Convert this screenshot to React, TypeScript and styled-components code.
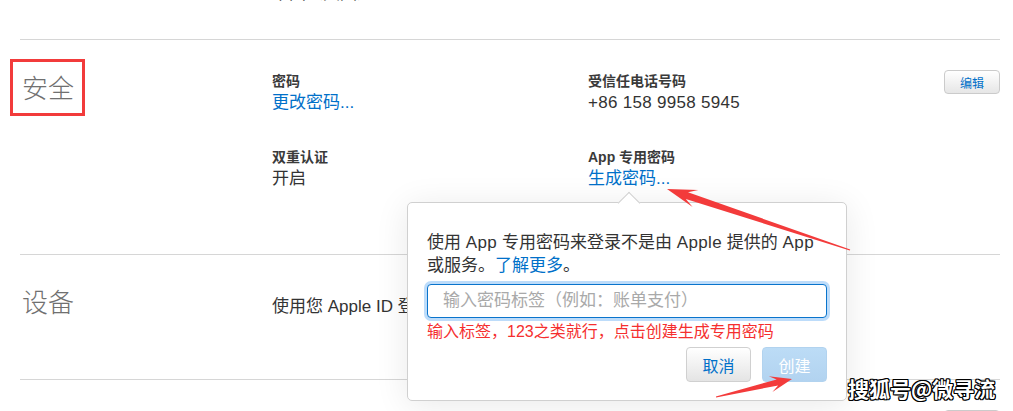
import React from "react";
import styled, { createGlobalStyle } from "styled-components";

const GlobalStyle = createGlobalStyle`
  html, body { margin: 0; padding: 0; background: #fff; }
  body {
    font-family: "Liberation Sans", "Noto Sans CJK SC", sans-serif;
    color: #333;
    overflow: hidden;
  }
  * { box-sizing: border-box; }
`;

const Page = styled.div`
  position: relative;
  width: 1013px;
  height: 411px;
  overflow: hidden;
  background: #fff;
`;

const Content = styled.div`
  margin-top: -17px;
  padding: 0 13px 0 20px;
`;

const Section = styled.section<{ $top: number; $bottom: number; $line?: boolean }>`
  display: grid;
  grid-template-columns: 252px 316px 1fr 56px;
  align-items: start;
  padding-top: ${(p) => p.$top}px;
  padding-bottom: ${(p) => p.$bottom}px;
  border-top: ${(p) => (p.$line ? "1px solid #d6d6d6" : "none")};
`;

const Heading = styled.h2`
  position: relative;
  justify-self: start;
  align-self: start;
  margin: 0 0 0 2px;
  font-family: "Noto Sans CJK SC", sans-serif;
  font-weight: 300;
  font-size: 26px;
  line-height: 34px;
  color: #707070;
`;

const Highlight = styled.span`
  position: absolute;
  left: -12px;
  right: -11px;
  top: -11px;
  bottom: -12px;
  border: 3px solid #f23b3b;
`;

const Column = styled.div`
  display: flex;
  flex-direction: column;
  gap: 32px;
`;

const Field = styled.div`
  display: flex;
  flex-direction: column;
`;

const Label = styled.div`
  font-size: 14px;
  font-weight: bold;
  line-height: 22px;
  color: #3a3a3a;
`;

const Value = styled.div<{ $link?: boolean; $spaced?: boolean }>`
  font-size: 17px;
  line-height: 22px;
  color: ${(p) => (p.$link ? "#0070c9" : "#333")};
  letter-spacing: ${(p) => (p.$spaced ? "0.3px" : "0")};
`;

const Description = styled.div`
  grid-column: 2 / 5;
  margin-top: 12px;
  font-size: 17px;
  line-height: 22px;
  color: #333;
  white-space: nowrap;
`;

const EditButton = styled.button`
  grid-column: 4;
  align-self: start;
  width: 56px;
  height: 24px;
  padding: 0;
  font-family: "Noto Sans CJK SC", sans-serif;
  font-size: 12px;
  color: #0070c9;
  border: 1px solid #cbcbcb;
  border-radius: 4px;
  background: linear-gradient(#ffffff, #e6e6e6);
`;

const Popover = styled.div`
  position: absolute;
  left: 407px;
  top: 202px;
  width: 440px;
  height: 199px;
  padding: 28px 19px 18px 19px;
  background: #fff;
  border: 1px solid #d0d0d0;
  border-radius: 5px;
  box-shadow: 0 4px 34px rgba(0, 0, 0, 0.09);
  &::before {
    content: "";
    position: absolute;
    left: 213px;
    top: -8px;
    width: 15px;
    height: 15px;
    background: #fff;
    border-left: 1px solid #d0d0d0;
    border-top: 1px solid #d0d0d0;
    transform: rotate(45deg);
  }
`;

const Text = styled.p`
  margin: 0;
  font-size: 17px;
  line-height: 23px;
  color: #333;
`;

const Link = styled.a`
  color: #0070c9;
  text-decoration: none;
`;

const Latin = styled.span`
  font-family: "Liberation Sans", sans-serif;
  letter-spacing: 0.4px;
`;

const Input = styled.input`
  display: block;
  width: 100%;
  height: 34px;
  margin-top: 7px;
  padding: 0 15px;
  font-family: "Liberation Sans", "Noto Sans CJK SC", sans-serif;
  font-size: 17px;
  color: #333;
  border: 1px solid #0a74cc;
  border-radius: 4px;
  outline: none;
  box-shadow: 0 0 0 3px rgba(135, 192, 245, 0.55);
  &::placeholder { color: #a9a9a9; }
`;

const Note = styled.div`
  margin-top: 4px;
  font-size: 16px;
  line-height: 20px;
  color: #f52f2f;
`;

const ButtonRow = styled.div`
  display: flex;
  justify-content: flex-end;
  gap: 11px;
  margin-top: 5px;
`;

const DialogButton = styled.button<{ $primary?: boolean }>`
  width: 65px;
  height: 35px;
  padding: 0;
  font-family: "Noto Sans CJK SC", sans-serif;
  font-size: 16px;
  border-radius: 4px;
  border: 1px solid ${(p) => (p.$primary ? "#b2d3ef" : "#d0d0d0")};
  color: ${(p) => (p.$primary ? "#fff" : "#0070c9")};
  background: ${(p) =>
    p.$primary ? "linear-gradient(#bcdcf6, #b2d3f0)" : "linear-gradient(#ffffff, #e4e4e4)"};
`;

const Overlay = styled.svg`
  position: absolute;
  left: 0;
  top: 0;
  pointer-events: none;
`;

const Watermark = styled.div`
  position: absolute;
  left: 848px;
  top: 375px;
  font-family: "Noto Sans CJK SC", sans-serif;
  font-size: 21px;
  font-weight: bold;
  line-height: 26px;
  color: #fff;
  text-shadow: 1px 0 0 #000, -1px 0 0 #000, 0 1px 0 #000, 0 -1px 0 #000,
    1px 1px 0 #000, -1px -1px 0 #000, 1px -1px 0 #000, -1px 1px 0 #000;
`;

function arrowPoints(
  tx: number, ty: number, px: number, py: number,
  headLen: number, headW: number, neckLen: number, shaftW: number
): string {
  const dx = px - tx;
  const dy = py - ty;
  const L = Math.hypot(dx, dy);
  const ux = dx / L, uy = dy / L;
  const nx = -uy, ny = ux;
  const nX = px - ux * neckLen, nY = py - uy * neckLen;
  const bX = px - ux * headLen, bY = py - uy * headLen;
  const pts: [number, number][] = [
    [tx + nx * 0.5, ty + ny * 0.5],
    [nX + nx * shaftW, nY + ny * shaftW],
    [bX + nx * headW, bY + ny * headW],
    [px, py],
    [bX - nx * headW, bY - ny * headW],
    [nX - nx * shaftW, nY - ny * shaftW],
    [tx - nx * 0.5, ty - ny * 0.5],
  ];
  return pts.map(([x, y]) => `${x.toFixed(1)},${y.toFixed(1)}`).join(" ");
}

export default function App() {
  return (
    <>
      <GlobalStyle />
      <Page>
        <Content>
          <Section $top={0} $bottom={34}>
            <div />
            <Value>中国（大陆）</Value>
          </Section>

          <Section $line $top={30} $bottom={64}>
            <Heading>
              安全
              <Highlight />
            </Heading>
            <Column>
              <Field>
                <Label>密码</Label>
                <Value $link>更改密码...</Value>
              </Field>
              <Field>
                <Label>双重认证</Label>
                <Value>开启</Value>
              </Field>
            </Column>
            <Column>
              <Field>
                <Label>受信任电话号码</Label>
                <Value $spaced>+86 158 9958 5945</Value>
              </Field>
              <Field>
                <Label>App 专用密码</Label>
                <Value $link>生成密码...</Value>
              </Field>
            </Column>
            <EditButton>编辑</EditButton>
          </Section>

          <Section $line $top={29} $bottom={61}>
            <Heading>设备</Heading>
            <Description>使用您 Apple ID 登录的设备显示在下方。</Description>
          </Section>

          <Section $line $top={30} $bottom={20}>
            <div />
            <div />
            <div />
            <EditButton aria-label="编辑" />
          </Section>
        </Content>

        <Popover>
          <Text>
            使用 <Latin>App</Latin> 专用密码来登录不是由 <Latin>Apple</Latin> 提供的 <Latin>App</Latin>
            <br />
            或服务。<Link>了解更多</Link>。
          </Text>
          <Input placeholder="输入密码标签（例如：账单支付）" />
          <Note>输入标签，123之类就行，点击创建生成专用密码</Note>
          <ButtonRow>
            <DialogButton>取消</DialogButton>
            <DialogButton $primary>创建</DialogButton>
          </ButtonRow>
        </Popover>

        <Overlay width={1013} height={411} viewBox="0 0 1013 411">
          <polygon points={arrowPoints(850, 250, 667, 189, 30, 9, 21, 3.5)} fill="#f33b3b" />
          <polygon points={arrowPoints(716, 397, 792, 379, 22, 8, 15, 3)} fill="#f33b3b" />
        </Overlay>

        <Watermark>搜狐号@微寻流</Watermark>
      </Page>
    </>
  );
}
